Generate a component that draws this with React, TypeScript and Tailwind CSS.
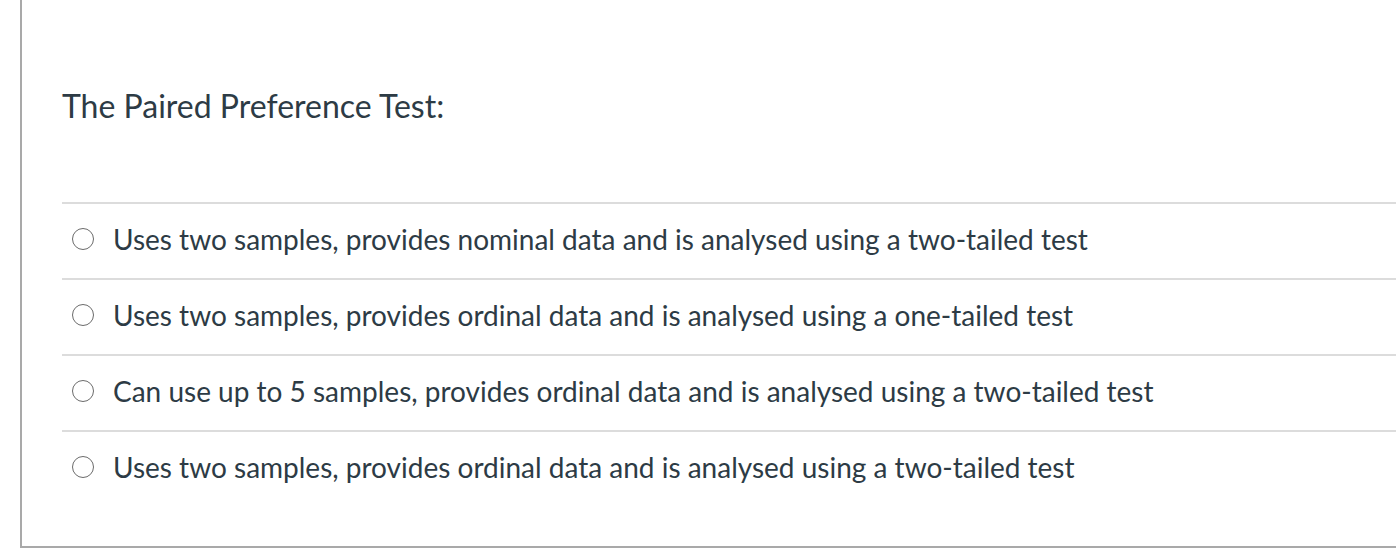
import React from "react";

const options = [
  "Uses two samples, provides nominal data and is analysed using a two-tailed test",
  "Uses two samples, provides ordinal data and is analysed using a one-tailed test",
  "Can use up to 5 samples, provides ordinal data and is analysed using a two-tailed test",
  "Uses two samples, provides ordinal data and is analysed using a two-tailed test",
];

export default function App() {
  return (
    <div
      className="w-[1396px] h-[552px] bg-white overflow-hidden"
      style={{ fontFamily: "Lato, 'Open Sans', sans-serif" }}
    >
      <div className="ml-[20px] h-[548px] border-l-2 border-b-2 border-[#a9a9a9] pl-[40px] text-[#2d3b45]">
        <div className="pt-[86px] h-[202px] text-[32px] leading-[40px]">
          The Paired Preference Test:
        </div>
        <div>
          {options.map((o, i) => (
            <div
              key={i}
              className="flex items-center h-[76px] border-t-2 border-[#dcdcdc] pl-[10px] pb-[4px]"
            >
              <span className="w-[22px] h-[22px] rounded-full border-[1.75px] border-[#6b6b6b] shrink-0" />
              <span className="ml-[19px] text-[28px] leading-[34px]">{o}</span>
            </div>
          ))}
        </div>
      </div>
    </div>
  );
}
